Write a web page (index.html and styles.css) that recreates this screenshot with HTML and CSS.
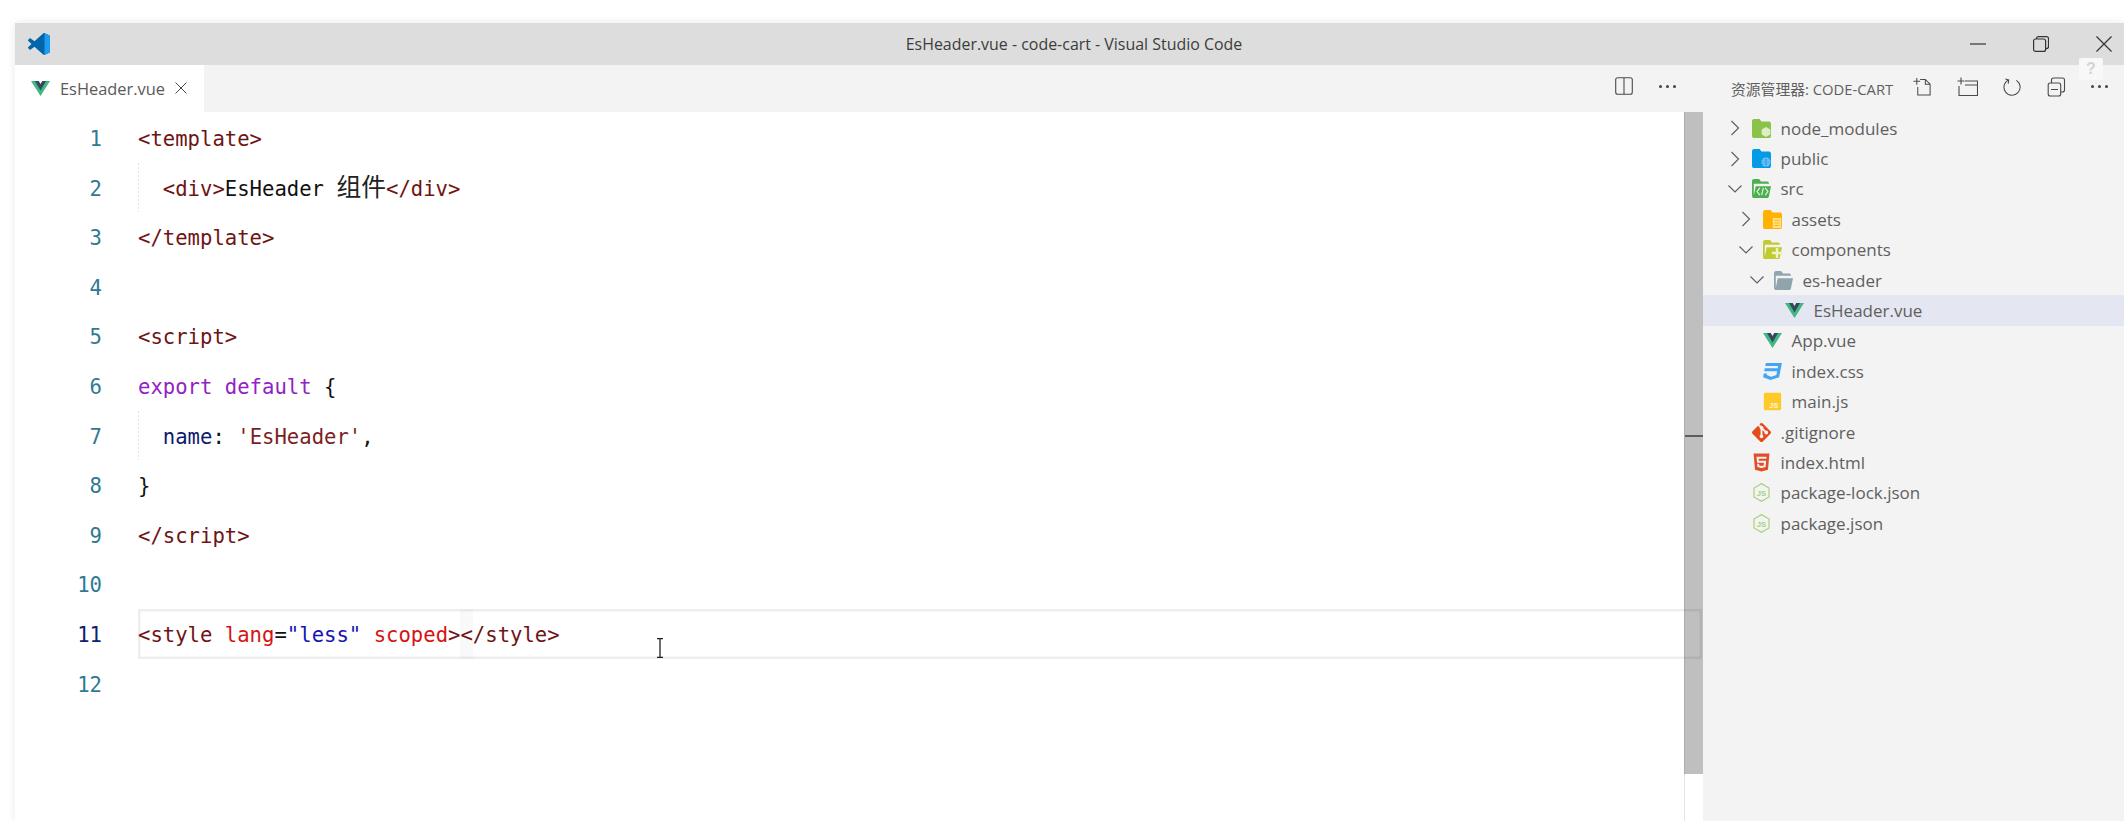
FILE: index.html
```html
<!DOCTYPE html>
<html lang="zh">
<head>
<meta charset="utf-8">
<title>EsHeader.vue - code-cart - Visual Studio Code</title>
<link rel="stylesheet" href="styles.css">
</head>
<body>
<svg class="defs" width="0" height="0" aria-hidden="true">
  <defs>
    <symbol id="vue" viewBox="0 2.500 24 20"><path fill="#41b883" d="M0 3h6.500L12 12l5.500-9H24L12 22z"/><path fill="#35495e" d="M5 3h4.800L12 6.800 14.200 3H19l-7 12z"/></symbol>
    <symbol id="right" viewBox="0 0 16 16"><path d="M4.500 1l7 7-7 7" fill="none" stroke="#616161" stroke-width="1.200"/></symbol>
    <symbol id="down" viewBox="0 0 16 16"><path d="M1.500 4.500l6.500 6.500 6.500-6.500" fill="none" stroke="#616161" stroke-width="1.200"/></symbol>
    <symbol id="closed" viewBox="2 4 20 16" preserveAspectRatio="none"><path d="M10 4H4c-1.100 0-2 .9-2 2v12c0 1.100.9 2 2 2h16c1.100 0 2-.9 2-2V8c0-1.100-.9-2-2-2h-8l-2-2z"/></symbol>
    <symbol id="open" viewBox="2 4 21.200 16" preserveAspectRatio="none"><path d="M19 20H4a2 2 0 0 1-2-2V6c0-1.110.89-2 2-2h6l2 2h7a2 2 0 0 1 2 2H4v10l2.140-8h17.070l-2.280 8.500c-.23.870-1.010 1.500-1.930 1.500z"/></symbol>
    <symbol id="node" viewBox="3 1.500 18 21"><path fill="none" stroke="#a5d27a" stroke-width="1.300" d="M12 2.200l8.300 4.800v10L12 21.800 3.700 17V7z"/><text x="12" y="16" text-anchor="middle" class="icon-js node-js">JS</text></symbol>
  </defs>
</svg>
<div class="window">
  <header class="titlebar">
    <div class="title-left">
      <svg class="logo" viewBox="0 0 100 100"><path fill="#0065a9" d="M70.910 99.320c1.580.610 3.370.570 4.960-.19l20.590-9.910C98.620 88.180 100 85.990 100 83.590V16.410c0-2.400-1.380-4.590-3.540-5.630L75.870.87C73.790-.13 71.340.12 69.510 1.450c-.26.190-.51.400-.74.630L29.360 38.040 12.190 25.010c-1.600-1.210-3.840-1.110-5.320.24l-5.510 5.010c-1.810 1.650-1.820 4.510 0 6.160L16.250 50 1.360 63.580c-1.810 1.660-1.810 4.510 0 6.170l5.510 5c1.480 1.350 3.720 1.450 5.320.24l17.170-13.030 39.410 35.960c.62.620 1.360 1.090 2.140 1.400zM75.020 27.300L45.110 50l29.910 22.700z"/><path fill="#1f9cf0" d="M75 .2c.3.200.6.400.9.700l20.600 9.900c2.100 1 3.500 3.200 3.500 5.600v67.200c0 2.400-1.400 4.600-3.500 5.600l-20.600 9.900c-.3.100-.6.300-.9.400z"/></svg>
    </div>
    <div class="title-text">EsHeader.vue - code-cart - Visual Studio Code</div>
    <div class="controls">
      <svg class="ctl" viewBox="0 0 16 16"><path d="M0 8h16"/></svg>
      <svg class="ctl" viewBox="0 0 16 16"><rect x=".6" y="3" width="12" height="12.400" rx="2"/><path d="M3.500 3V2.600A2 2 0 0 1 5.500.6h8a2 2 0 0 1 2 2v8a2 2 0 0 1-2 2H13"/></svg>
      <svg class="ctl" viewBox="0 0 16 16"><path d="M.5.5l15 15M15.500.5l-15 15"/></svg>
    </div>
  </header>
  <div class="main">
    <section class="group">
      <div class="tabbar">
        <div class="tab">
          <svg class="tab-icon"><use href="#vue"/></svg>
          <span class="tab-name">EsHeader.vue</span>
          <svg class="tab-close" viewBox="0 0 12 12"><path d="M.5.5l11 11M11.500.5l-11 11"/></svg>
        </div>
        <div class="tab-actions">
          <svg class="act split" viewBox="0 0 18 18"><rect x=".7" y=".7" width="16.600" height="16.600" rx="2"/><path d="M9 .7v16.600"/></svg>
          <div class="dots"><i></i><i></i><i></i></div>
        </div>
      </div>
      <div class="editor">
        <div class="lines">
          <div class="line"><span class="ln">1</span><div class="src"><span class="t">&lt;template&gt;</span></div></div>
          <div class="line"><span class="ln">2</span><div class="src guide">  <span class="t">&lt;div&gt;</span>EsHeader <span class="cjk">组件</span><span class="t">&lt;/div&gt;</span></div></div>
          <div class="line"><span class="ln">3</span><div class="src"><span class="t">&lt;/template&gt;</span></div></div>
          <div class="line"><span class="ln">4</span><div class="src"></div></div>
          <div class="line"><span class="ln">5</span><div class="src"><span class="t">&lt;script&gt;</span></div></div>
          <div class="line"><span class="ln">6</span><div class="src"><span class="k">export default</span> {</div></div>
          <div class="line"><span class="ln">7</span><div class="src guide">  <span class="p">name</span>: <span class="s">'EsHeader'</span>,</div></div>
          <div class="line"><span class="ln">8</span><div class="src">}</div></div>
          <div class="line"><span class="ln">9</span><div class="src"><span class="t">&lt;/script&gt;</span></div></div>
          <div class="line"><span class="ln">10</span><div class="src"></div></div>
          <div class="line current"><span class="ln">11</span><div class="src"><span class="t">&lt;style</span> <span class="a">lang</span>=<span class="v">"less"</span> <span class="a">scoped</span><span class="t">&gt;<span class="match">&lt;</span>/style&gt;</span><svg class="ibeam" viewBox="0 0 8 20"><path d="M1 .7h6M1 19.300h6M4 .7v18.600"/></svg></div></div>
          <div class="line"><span class="ln">12</span><div class="src"></div></div>
        </div>
        <div class="vscroll"><div class="thumb"><i class="tick"></i></div></div>
      </div>
    </section>
    <aside class="sidebar">
      <div class="side-head">
        <span class="side-title">资源管理器: CODE-CART</span>
        <div class="side-actions">
          <svg class="act" viewBox="0 0 20 20"><path d="M4 .5v7M.5 4h7M7.500 2H13l5 5v11.500H5V10M13 2v5h5"/></svg>
          <svg class="act wide" viewBox="0 0 21 20"><path d="M4 .5v7M.5 4h7M8 4h12.500v14.500H2V9M8 8h12.500"/></svg>
          <svg class="act" viewBox="0 0 20 20"><path d="M6 2.500A8.500 8.500 0 1 0 14 3M2.500 1.500L6 2.500 5.500 6.500"/></svg>
          <svg class="act" viewBox="0 0 18 20"><rect x=".7" y="6" width="12.500" height="13" rx="2"/><path d="M4 6V3a2 2 0 0 1 2-2h9a2 2 0 0 1 2 2v10a2 2 0 0 1-2 2h-2M3.500 12.500h7"/></svg>
          <div class="dots"><i></i><i></i><i></i></div>
        </div>
        <div class="tooltip">?</div>
      </div>
      <ul class="tree">
        <li class="row"><svg class="chev"><use href="#right"/></svg><span class="ficon"><svg class="fill-node"><use href="#closed"/></svg><svg class="badge" viewBox="0 0 12 12"><path fill="#dcedc8" d="M6 0l5.200 3v6L6 12 .8 9V3z"/></svg></span><span>node_modules</span></li>
        <li class="row"><svg class="chev"><use href="#right"/></svg><span class="ficon"><svg class="fill-public"><use href="#closed"/></svg><svg class="badge" viewBox="0 0 12 12"><circle cx="6" cy="6" r="5.500" fill="#90caf9"/><path d="M.5 6h11M6 .5v11M1.500 3.500h9M1.500 8.500h9" stroke="#039be5" stroke-width=".9"/></svg></span><span>public</span></li>
        <li class="row"><svg class="chev"><use href="#down"/></svg><span class="ficon"><svg class="fill-src"><use href="#open"/></svg><svg class="badge code" viewBox="0 0 14 10"><path d="M4 1L1 5l3 4M10 1l3 4-3 4M8 1L6 9" fill="none" stroke="#e8f5e9" stroke-width="1.300"/></svg></span><span>src</span></li>
        <li class="row d1"><svg class="chev"><use href="#right"/></svg><span class="ficon"><svg class="fill-assets"><use href="#closed"/></svg><svg class="badge" viewBox="0 0 12 12"><rect x="1" y="0" width="10" height="12" fill="#ffe082"/><path d="M3 3h6M3 6h6M3 9h6" stroke="#ffb300"/></svg></span><span>assets</span></li>
        <li class="row d1"><svg class="chev"><use href="#down"/></svg><span class="ficon"><svg class="fill-comp"><use href="#open"/></svg><svg class="badge" viewBox="0 0 12 12"><path d="M6 0v12M0 6h12" stroke="#f0f4c3" stroke-width="3"/></svg></span><span>components</span></li>
        <li class="row d2"><svg class="chev"><use href="#down"/></svg><span class="ficon"><svg class="fill-plain"><use href="#open"/></svg></span><span>es-header</span></li>
        <li class="row d3 selected"><i class="chev"></i><span class="ficon"><svg><use href="#vue"/></svg></span><span>EsHeader.vue</span></li>
        <li class="row d1"><i class="chev"></i><span class="ficon"><svg><use href="#vue"/></svg></span><span>App.vue</span></li>
        <li class="row d1"><i class="chev"></i><span class="ficon"><svg viewBox="2 2 20 20"><path fill="#42a5f5" d="M5 3l-.65 3.340h13.590L17.500 8.500H3.920l-.66 3.330h13.590l-.76 3.810-5.480 1.810-4.750-1.810.33-1.640H2.850l-.79 4 7.850 3 9.050-3 1.200-6.030.24-1.210L21.940 3H5z"/></svg></span><span>index.css</span></li>
        <li class="row d1"><i class="chev"></i><span class="ficon"><svg viewBox="1 1 22 22"><rect x="2" y="2" width="20" height="20" rx="1.500" fill="#ffca28"/><text x="13.500" y="20" text-anchor="middle" class="icon-js">JS</text></svg></span><span>main.js</span></li>
        <li class="row"><i class="chev"></i><span class="ficon"><svg viewBox="2 2 20 20"><path fill="#e64a19" d="M2.600 10.590L8.380 4.800l1.690 1.700c-.24.850.15 1.780.93 2.230v5.540c-.6.340-1 .99-1 1.730a2 2 0 0 0 2 2 2 2 0 0 0 2-2c0-.74-.4-1.390-1-1.730V9.410l2.070 2.090c-.07.150-.07.320-.07.500a2 2 0 0 0 2 2 2 2 0 0 0 2-2 2 2 0 0 0-2-2c-.18 0-.35 0-.5.070L13.930 7.500a1.980 1.980 0 0 0-1.150-2.340c-.43-.16-.88-.2-1.280-.09L9.800 3.380l.79-.78c.78-.79 2.040-.79 2.820 0l7.990 7.990c.79.780.79 2.040 0 2.820l-7.990 7.990c-.78.790-2.040.79-2.820 0L2.600 13.410c-.79-.78-.79-2.040 0-2.820z"/></svg></span><span>.gitignore</span></li>
        <li class="row"><i class="chev"></i><span class="ficon"><svg viewBox="3 2.500 18 19"><path fill="#e44d26" d="M12 17.560l4.070-1.130.55-6.100H9.380L9.200 8.300h7.600l.2-1.990H7l.56 6.010h6.890l-.23 2.580-2.220.6-2.220-.6-.14-1.660h-2l.29 3.190L12 17.560M4.070 3h15.860L18.500 19.200 12 21l-6.500-1.800L4.070 3z"/></svg></span><span>index.html</span></li>
        <li class="row"><i class="chev"></i><span class="ficon"><svg><use href="#node"/></svg></span><span>package-lock.json</span></li>
        <li class="row"><i class="chev"></i><span class="ficon"><svg><use href="#node"/></svg></span><span>package.json</span></li>
      </ul>
    </aside>
  </div>
</div>
</body>
</html>
```
FILE: styles.css
```css
* { box-sizing: border-box; }
html, body { height: 100%; }
body {
  margin: 0;
  background: #fff;
  overflow: hidden;
  padding: 23px 0 0 15px;
  font-family: "Open Sans", "Noto Sans CJK SC", sans-serif;
}
.defs { position: absolute; }
.window {
  height: 798px;
  display: flex;
  flex-direction: column;
  background: #fff;
  box-shadow: 0 0 9px rgba(0, 0, 0, .09);
}

/* title bar */
.titlebar {
  height: 42px;
  flex: none;
  background: #dddddd;
  display: grid;
  grid-template-columns: 1fr auto 1fr;
  align-items: center;
  padding-left: 9px;
}
.title-left { display: flex; padding-left: 4px; }
.logo { width: 22px; height: 22px; }
.title-text { font-size: 15.950px; color: #3c3c3c; white-space: nowrap; }
.controls { display: flex; justify-content: flex-end; gap: 47px; padding-right: 12px; }
.ctl { width: 16px; height: 16px; fill: none; stroke: #333; stroke-width: 1.200; }

/* layout */
.main { flex: 1; display: flex; min-height: 0; }
.group { flex: 1; min-width: 0; display: flex; flex-direction: column; }
.sidebar { width: 421px; flex: none; background: #f3f3f3; display: flex; flex-direction: column; }

/* tabs */
.tabbar { height: 47px; flex: none; display: flex; background: #f3f3f3; justify-content: space-between; }
.tab { width: 189px; background: #fff; display: flex; align-items: center; padding: 0 0 1px 16px; }
.tab-icon { width: 19px; height: 17px; }
.tab-name { margin-left: 10px; font-size: 16.400px; color: #5a5a5a; white-space: nowrap; }
.tab-close { width: 12px; height: 12px; margin-left: 10px; fill: none; stroke: #444; stroke-width: 1; }
.tab-actions { display: flex; align-items: center; gap: 26px; padding: 0 27px 5px 0; }
.act { width: 19px; height: 20px; fill: none; stroke: #4a4a4a; stroke-width: 1.100; flex: none; }
.split { width: 18px; height: 18px; }
.dots { display: flex; gap: 4px; width: 17px; }
.dots i { width: 3px; height: 3px; border-radius: 50%; background: #424242; }

/* editor */
.editor { flex: 1; display: flex; min-height: 0; }
.lines { flex: 1; min-width: 0; padding-top: 1px; }
.line {
  display: flex;
  height: 49.600px;
  line-height: 53px;
  font-family: "DejaVu Sans Mono", "Noto Sans CJK SC", monospace;
  font-size: 20.600px;
  white-space: pre;
  color: #111;
}
.ln { width: 87px; flex: none; text-align: right; color: #2f7a93; }
.src { margin-left: 36px; flex: 1; position: relative; z-index: 1; }
.guide { background: repeating-linear-gradient(#e4e4e4 0 2px, transparent 2px 4px) 0 0 / 1px 100% no-repeat; }
.current .ln { color: #0b216f; }
.current { margin-right: -18px; }
.current .src { box-shadow: inset 0 0 0 2.500px rgba(0, 0, 0, .065); }
.t { color: #6e1414; }
.k { color: #9222c4; }
.p { color: #0c1a6e; }
.s { color: #7c1f25; }
.a { color: #d41414; }
.v { color: #1414b0; }
.cjk { font-family: "Noto Sans CJK SC", sans-serif; font-size: 24.800px; line-height: 0; color: #222; }
.match { display: inline-block; height: 49.600px; vertical-align: top; background: rgba(0, 0, 0, .025); }
.ibeam {
  position: absolute;
  left: 518px;
  top: 29px;
  width: 8px;
  height: 20px;
  fill: none;
  stroke: #222;
  stroke-width: 1.300;
}

/* scrollbar */
.vscroll { width: 19px; flex: none; border-left: 1px solid #e4e4e4; }
.thumb {
  height: 662px;
  margin-left: -1px;
  background: #bfbfbf;
  border-left: 1px solid #adadad;
  padding-top: 323px;
}
.tick { display: block; height: 2px; background: #5d5d5d; }

/* sidebar */
.side-head { height: 47px; flex: none; display: flex; align-items: center; padding: 0 16px 1px 28px; position: relative; }
.side-title { font-size: 14.800px; color: #5f5f5f; white-space: nowrap; }
.side-actions { margin-left: auto; display: flex; align-items: center; gap: 25px; padding-bottom: 3px; }
.wide { width: 21px; }
.tooltip {
  position: absolute;
  left: 376px;
  top: -7px;
  width: 24px;
  height: 22px;
  background: #f8f8f8;
  border-radius: 2px;
  color: #d3d3d3;
  font: 700 16px/22px "Liberation Sans", sans-serif;
  text-align: center;
}
.tree { list-style: none; margin: 0; padding: 1px 0 0; }
.row {
  height: 30.400px;
  display: flex;
  align-items: center;
  padding-left: 24px;
  font-size: 17px;
  color: #5f5f5f;
  white-space: nowrap;
}
.d1 { padding-left: 35px; }
.d2 { padding-left: 46px; }
.d3 { padding-left: 57px; }
.selected { background: #e4e6f1; }
.chev { width: 16px; height: 16px; flex: none; margin-right: 9px; }
.ficon { width: 19px; height: 19px; flex: none; margin-right: 9.500px; position: relative; }
.ficon svg { display: block; width: 19px; height: 19px; }
.icon-js { font: 700 8.500px "Liberation Sans", sans-serif; fill: #fff8e1; }
.node-js { fill: #a5d27a; }
.fill-node { fill: #8bc34a; }
.fill-public { fill: #039be5; }
.fill-src { fill: #4caf50; }
.fill-assets { fill: #ffb300; }
.fill-comp { fill: #c0ca33; }
.fill-plain { fill: #90a4ae; }
.ficon .badge { position: absolute; right: 0; bottom: 1px; width: 10px; height: 10px; }
.ficon .code { width: 13px; height: 9px; right: 2px; bottom: 2px; }
```
